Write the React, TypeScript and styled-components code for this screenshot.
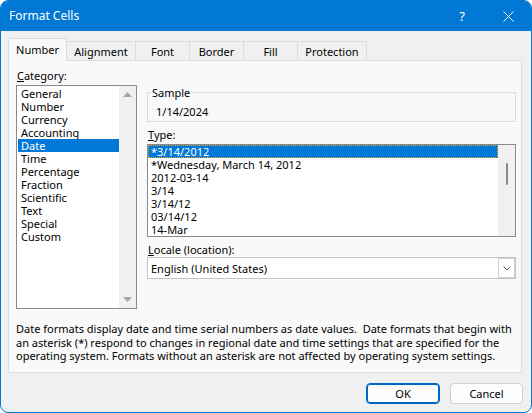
import React from "react";
import styled, { createGlobalStyle, css } from "styled-components";

const Global = createGlobalStyle`
  html, body { margin: 0; padding: 0; background: #ffffff; }
  body { font-family: "Noto Sans", "Segoe UI", Arial, sans-serif; font-size: 11px; color: #000; }
  * { box-sizing: border-box; }
`;

const FONT = `"Noto Sans", "Segoe UI", Arial, sans-serif`;

const Window = styled.div`
  width: 532px;
  height: 413px;
  border: 1px solid #0078d4;
  border-radius: 8px;
  background: #f0f0f0;
  overflow: hidden;
  display: flex;
  flex-direction: column;
  font-family: ${FONT};
  font-size: 11px;
`;

const TitleBar = styled.div`
  height: 30px;
  flex: none;
  background: #0078d4;
  color: #ffffff;
  display: flex;
  align-items: center;
  padding-left: 8px;
`;

const Title = styled.div`
  flex: 1;
  font-size: 12px;
  line-height: 16px;
  margin-top: 0px;
`;

const TitleButton = styled.div`
  width: 46px;
  height: 30px;
  display: flex;
  align-items: center;
  justify-content: center;
  font-size: 13px;
  color: #ffffff;
`;

const Body = styled.div`
  flex: 1;
  display: flex;
  flex-direction: column;
  padding: 7px 0 0 7px;
`;

const TabStrip = styled.div`
  height: 22px;
  display: flex;
  align-items: flex-end;
  position: relative;
  z-index: 1;
`;

const Tab = styled.div<{ $w: number; $active?: boolean }>`
  width: ${(p) => p.$w}px;
  height: 19px;
  border: 1px solid #dcdcdc;
  border-bottom: none;
  background: #f0f0f0;
  display: flex;
  align-items: center;
  justify-content: center;
  line-height: 13px;
  margin-left: -1px;
  &:first-child { margin-left: 0; }
  ${(p) =>
    p.$active &&
    css`
      height: 23px;
      margin-bottom: -1px;
      background: #f9f9f9;
      position: relative;
      z-index: 2;
      padding-bottom: 1px;
    `}
`;

const Pane = styled.div`
  width: 514px;
  height: 313px;
  background: #f9f9f9;
  border: 1px solid #dcdcdc;
  display: flex;
  flex-direction: column;
`;

const Columns = styled.div`
  display: grid;
  grid-template-columns: 121px 369px;
  column-gap: 10px;
  padding: 8px 0 0 7px;
`;

const Column = styled.div`
  display: flex;
  flex-direction: column;
`;

const FieldLabel = styled.div<{ $mt?: number }>`
  height: 13px;
  line-height: 13px;
  padding-left: 1px;
  margin-top: ${(p) => p.$mt ?? 0}px;
  u { text-decoration-thickness: 1px; text-underline-offset: 1px; }
`;

const ListBox = styled.div<{ $h: number; $mt: number; $pad: number }>`
  height: ${(p) => p.$h}px;
  margin-top: ${(p) => p.$mt}px;
  border: 1px solid #8a8a8a;
  background: #ffffff;
  display: flex;
`;

const ListItems = styled.div<{ $pad: number }>`
  flex: 1;
  padding: ${(p) => p.$pad}px 0 0 ${(p) => p.$pad}px;
  display: flex;
  flex-direction: column;
  overflow: hidden;
`;

const ListRow = styled.div<{ $selected?: boolean; $focus?: boolean; $indent: number }>`
  height: 13px;
  line-height: 13px;
  padding-left: ${(p) => p.$indent}px;
  white-space: nowrap;
  border: 1px solid transparent;
  display: flex;
  align-items: center;
  ${(p) =>
    p.$selected &&
    css`
      background: #0078d7;
      color: #ffffff;
    `}
  ${(p) =>
    p.$focus &&
    css`
      border: 1px dotted #f5a623;
    `}
`;

const ScrollTrack = styled.div`
  width: 17px;
  background: #f0f0f0;
  display: flex;
  flex-direction: column;
  align-items: center;
  justify-content: space-between;
`;

const ArrowBox = styled.div`
  width: 17px;
  height: 17px;
  display: flex;
  align-items: center;
  justify-content: center;
`;

const ThinThumb = styled.div`
  width: 2px;
  height: 22px;
  margin-top: 18px;
  background: #8a8a8a;
  border-radius: 1px;
`;

const Group = styled.fieldset`
  margin: 17px 0 0 0;
  padding: 0 0 3px 3px;
  border: 1px solid #dcdcdc;
  min-width: 0;
`;

const Legend = styled.legend`
  padding: 0 2px 0 1px;
  line-height: 13px;
  font-size: 11px;
`;

const SampleValue = styled.div`
  height: 13px;
  line-height: 13px;
  margin: 6px 0 0 5px;
`;

const Combo = styled.div`
  height: 22px;
  margin-top: 1px;
  border: 1px solid #c4c4c4;
  background: #ffffff;
  display: flex;
  align-items: center;
`;

const ComboText = styled.div`
  flex: 1;
  padding-left: 3px;
  line-height: 13px;
`;

const DropButton = styled.div`
  width: 17px;
  height: 20px;
  border: 1px solid #d0d0d0;
  background: #ffffff;
  display: flex;
  align-items: center;
  justify-content: center;
`;

const Description = styled.div`
  margin: 13px 0 0 0;
  padding: 0 7px;
  line-height: 13.6px;
  font-size: 11px;
`;

const ButtonRow = styled.div`
  display: flex;
  justify-content: flex-end;
  gap: 10px;
  padding-right: 8px;
  margin-top: 10px;
`;

const DialogButton = styled.div<{ $w: number; $default?: boolean }>`
  width: ${(p) => p.$w}px;
  height: 21px;
  border-radius: 4px;
  border: 1px solid ${(p) => (p.$default ? "#0067c0" : "#d0d0d0")};
  box-shadow: ${(p) => (p.$default ? "inset 0 0 0 1px #0067c0" : "none")};
  background: #fdfdfd;
  display: flex;
  align-items: center;
  justify-content: center;
  line-height: 13px;
`;

const tabs = [
  { label: "Number", w: 59, active: true },
  { label: "Alignment", w: 70 },
  { label: "Font", w: 55 },
  { label: "Border", w: 55 },
  { label: "Fill", w: 55 },
  { label: "Protection", w: 70 },
];

const categories = [
  "General",
  "Number",
  "Currency",
  "Accounting",
  "Date",
  "Time",
  "Percentage",
  "Fraction",
  "Scientific",
  "Text",
  "Special",
  "Custom",
];

const types = [
  "*3/14/2012",
  "*Wednesday, March 14, 2012",
  "2012-03-14",
  "3/14",
  "3/14/12",
  "03/14/12",
  "14-Mar",
];

const Triangle = ({ up }: { up?: boolean }) => (
  <svg width="9" height="5" viewBox="0 0 9 5">
    <polygon points={up ? "0,5 9,5 4.5,0" : "0,0 9,0 4.5,5"} fill="#a6a6a6" />
  </svg>
);

export default function App() {
  return (
    <>
      <Global />
      <Window>
        <TitleBar>
          <Title>Format Cells</Title>
          <TitleButton>?</TitleButton>
          <TitleButton>
            <svg width="11" height="11" viewBox="0 0 11 11">
              <path d="M0.5 0.5 L10.5 10.5 M10.5 0.5 L0.5 10.5" stroke="#ffffff" strokeWidth="1" />
            </svg>
          </TitleButton>
        </TitleBar>
        <Body>
          <TabStrip>
            {tabs.map((t) => (
              <Tab key={t.label} $w={t.w} $active={t.active}>
                {t.label}
              </Tab>
            ))}
          </TabStrip>
          <Pane>
            <Columns>
              <Column>
                <FieldLabel>
                  <u>C</u>ategory:
                </FieldLabel>
                <ListBox $h={224} $mt={3} $pad={1}>
                  <ListItems $pad={1}>
                    {categories.map((c) => (
                      <ListRow key={c} $indent={2} $selected={c === "Date"}>
                        {c}
                      </ListRow>
                    ))}
                  </ListItems>
                  <ScrollTrack>
                    <ArrowBox>
                      <Triangle up />
                    </ArrowBox>
                    <ArrowBox>
                      <Triangle />
                    </ArrowBox>
                  </ScrollTrack>
                </ListBox>
              </Column>
              <Column>
                <Group>
                  <Legend>Sample</Legend>
                  <SampleValue>1/14/2024</SampleValue>
                </Group>
                <FieldLabel $mt={6}>
                  <u>T</u>ype:
                </FieldLabel>
                <ListBox $h={93} $mt={3} $pad={0}>
                  <ListItems $pad={0}>
                    {types.map((t, i) => (
                      <ListRow key={t} $indent={2} $selected={i === 0} $focus={i === 0}>
                        {t}
                      </ListRow>
                    ))}
                  </ListItems>
                  <ScrollTrack style={{ justifyContent: "flex-start" }}>
                    <ThinThumb />
                  </ScrollTrack>
                </ListBox>
                <FieldLabel $mt={6}>
                  <u>L</u>ocale (location):
                </FieldLabel>
                <Combo>
                  <ComboText>English (United States)</ComboText>
                  <DropButton>
                    <svg width="8" height="5" viewBox="0 0 8 5">
                      <path d="M0.5 0.5 L4 4 L7.5 0.5" stroke="#606060" strokeWidth="1" fill="none" />
                    </svg>
                  </DropButton>
                </Combo>
              </Column>
            </Columns>
            <Description>
              Date formats display date and time serial numbers as date values.&nbsp; Date formats that begin with an
              asterisk (*) respond to changes in regional date and time settings that are specified for the operating
              system. Formats without an asterisk are not affected by operating system settings.
            </Description>
          </Pane>
          <ButtonRow>
            <DialogButton $w={74} $default>
              OK
            </DialogButton>
            <DialogButton $w={73}>Cancel</DialogButton>
          </ButtonRow>
        </Body>
      </Window>
    </>
  );
}
